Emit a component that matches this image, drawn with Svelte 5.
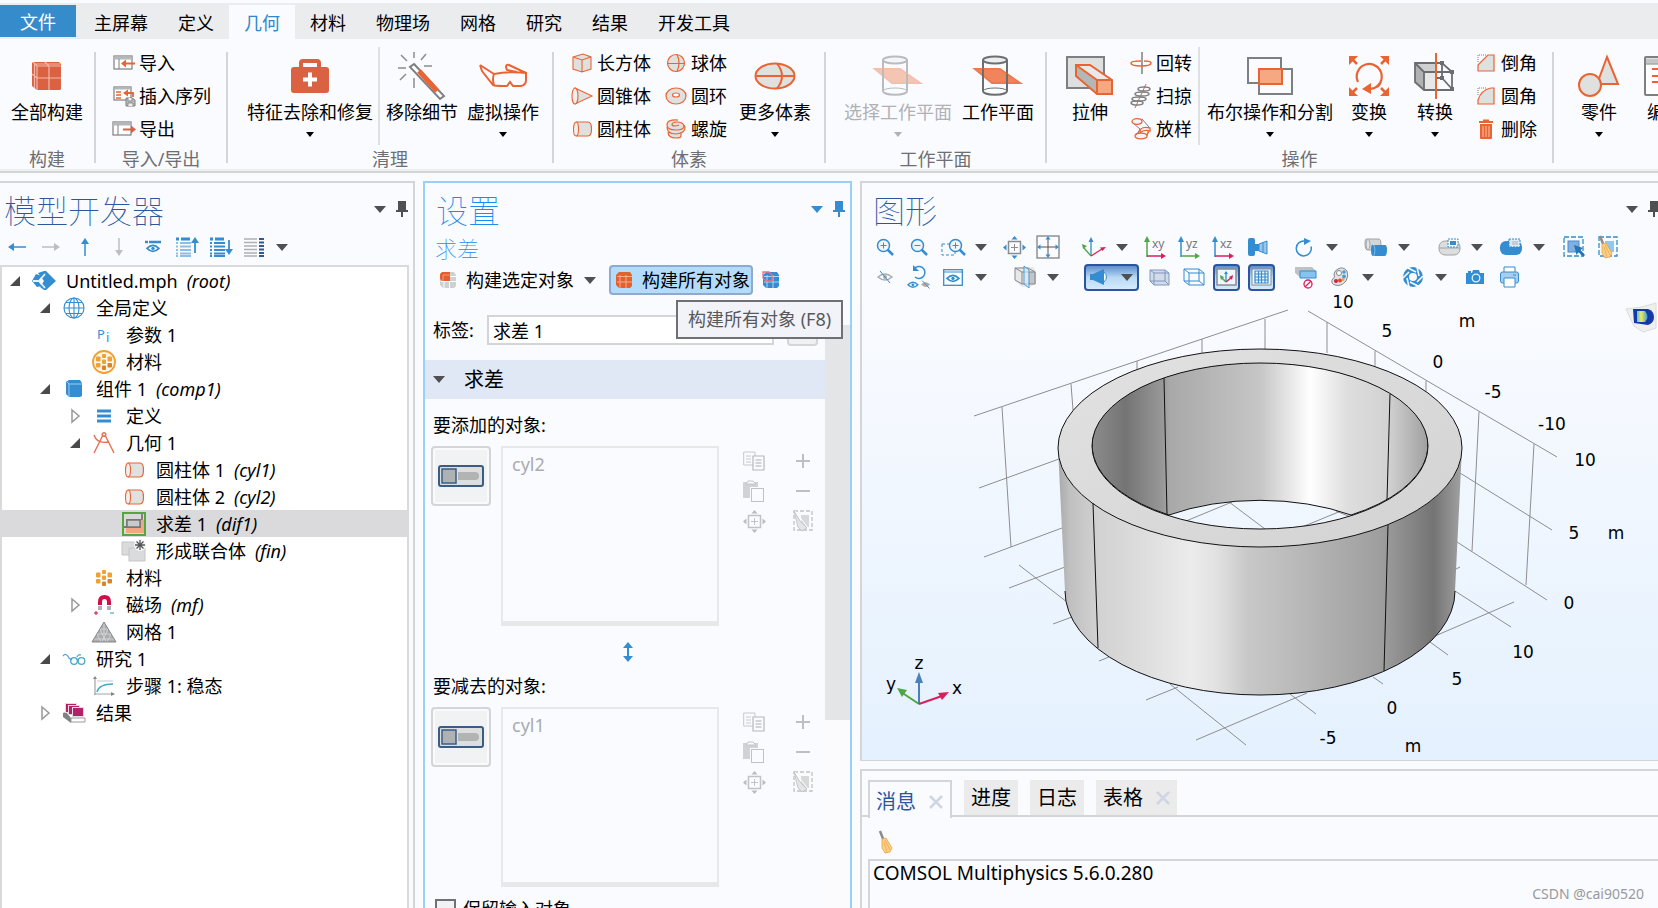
<script>
  const O = '#ea6433', G = '#7d7f80', F = '#dfe1df', B = '#338dd0', L = '#c6c8ca';
  const cyl = (s, g) => `<g fill="none" stroke="${g}" stroke-width="2"><ellipse cx="20" cy="5" rx="12" ry="3.500" fill="#eceeee"/><path d="M8 5V36c0 5 24 5 24 0V5"/><path d="M8 36c1-4 23-4 24 0" stroke-width="1"/></g><path d="M0 14H25L45 28H17Z" fill="${s}" stroke="${O}" stroke-width="2" opacity=".85"/><path d="M8 14V33M32 19V35" stroke="${g}" stroke-width="2"/>`;
  const magnifier = `<circle cx="7.500" cy="7.500" r="6" fill="#eef6fd" stroke="${B}" stroke-width="1.500"/><path d="M11.500 11.500L17 17" stroke="${B}" stroke-width="2.500"/>`;
  const axes = (n, c) => `<path d="M3 21V4" stroke="${n === 'xy' ? '#4ea645' : B}" stroke-width="1.500"/><path d="M0 6L3 0L6 6Z" fill="${n === 'xy' ? '#4ea645' : B}"/><path d="M3 20H18" stroke="${c}" stroke-width="1.500"/><path d="M17 17L22 20L17 23Z" fill="${c}"/><text x="8" y="12" font-size="12" fill="#777">${n}</text>`;
  const cells = (c) => `<g fill="${c}"><rect x="6" y="0" width="4" height="4" rx="1"/><rect x="0" y="2.500" width="4.500" height="5" rx="1"/><rect x="6" y="5.500" width="4" height="4.500" rx="1"/><rect x="11.500" y="2.500" width="4.500" height="5" rx="1"/><rect x="0" y="9" width="4.500" height="4.500" rx="1"/></g><g fill="#d5842b"><rect x="6" y="11.500" width="4" height="4.500" rx="1"/><rect x="11.500" y="9" width="4.500" height="4.500" rx="1"/></g>`;
  const cyl3 = `<path d="M4 1H16Q19.500 1 19.500 8T16 15H4" fill="${F}" stroke="${O}" stroke-width="1.200"/><ellipse cx="4" cy="8" rx="2.500" ry="7" fill="#eef0ef" stroke="${O}" stroke-width="1.100"/>`;
  const broom = (x) => `<g transform="translate(${x} 0)"><path d="M1 0L4.500 9" stroke="#8a8d90" stroke-width="2.500"/><path d="M3 8L7 7L13 17L11 21L6 22L3 17Z" fill="#fccf88" stroke="#e9a23c" stroke-width=".8"/><path d="M5 11L8 21M6 9L11 19" stroke="#e9a23c" stroke-width=".7"/></g>`;
  const eye = `<path d="M0 4Q7-3 14 4Q7 11 0 4Z" fill="none" stroke="${B}" stroke-width="2"/><circle cx="7" cy="4" r="2" fill="${B}"/>`;
  const listLines = (c) => `<path d="M1 2H4M6 2H15" stroke="${B}" stroke-width="3"/><g stroke="${c}" stroke-width="2"><path d="M1 6H3M5 6H16M1 9.500H3M5 9.500H16M1 13H3M5 13H16M1 16.500H3M5 16.500H16M1 19H3M5 19H16"/></g>`;
  const target = (c, k) => `<rect x="5.500" y="5.500" width="12" height="12" fill="none" stroke="${k}" stroke-width="1.500"/><path d="M8 11.500H15M11.500 8V15" stroke="${k}"/><g fill="${c}"><path d="M8.500 3.500L11.500 0L14.500 3.500ZM8.500 19.500L11.500 23L14.500 19.500ZM3.500 8.500L0 11.500L3.500 14.500ZM19.500 8.500L23 11.500L19.500 14.500Z"/></g>`;

  // name: [width, height, markup]
  const I = {
    buildAll: [30, 30, `<path d="M0 2L1 1H27L29 3V28L28 29H5L0 25Z" fill="#db6143"/><path d="M5 29V5H29M17 5V29M5 17H29M5 5L1 1M17 5L13 1M5 17L0 13M2.500 3H28M2.500 3V27" fill="none" stroke="#f4b9a6" stroke-width="1.200"/>`],
    import: [22, 16, `<rect x="1" y="1" width="18" height="13" fill="#fff" stroke="${G}" stroke-width="1.200"/><path d="M1 3H19" stroke="#b5b7b8" stroke-width="3"/><path d="M6 4V14" stroke="${G}"/><path d="M12 8.500H22" stroke="${O}" stroke-width="2"/><path d="M8 8.500L13 4.500V12.500Z" fill="${O}"/>`],
    insert: [22, 20, `<rect x="1" y="1" width="17" height="13" fill="#fff" stroke="${G}" stroke-width="1.200"/><path d="M1 2.500H18" stroke="#b5b7b8" stroke-width="2"/><path d="M3 6H8M3 9H8M3 12H8" stroke="${O}" stroke-width="1.300"/><path d="M14 7H20V11" fill="none" stroke="${O}" stroke-width="1.800"/><path d="M10 7L15 3.500V10.500Z" fill="${O}"/><path d="M13 12H19L22 14V20H13Z" fill="#b9bbbc" stroke="${G}"/><path d="M15 12V15H19V12M15 20V17H20V20" fill="#eee" stroke="${G}" stroke-width=".8"/>`],
    export: [24, 16, `<rect x="1" y="1" width="18" height="13" fill="#fff" stroke="${G}" stroke-width="1.200"/><path d="M1 3H19" stroke="#b5b7b8" stroke-width="3"/><path d="M6 4V14" stroke="${G}"/><path d="M11 8.500H21" stroke="#db6143" stroke-width="2"/><path d="M24 8.500L19 4.500V12.500Z" fill="#db6143"/>`],
    kit: [38, 34, `<path d="M3 8H8V4Q8 0 12 0H26Q30 0 30 4V8H35Q38 8 38 11V31Q38 34 35 34H3Q0 34 0 31V11Q0 8 3 8ZM12 8H26V4H12Z" fill="#db6143" fill-rule="evenodd"/><path d="M19 13.500V27.500M12 20.500H26" stroke="#fff" stroke-width="4"/>`],
    wand: [48, 48, `<g stroke="#8b8d8e" stroke-width="1.500"><path d="M16 0V6M3 3L9 9M28 2L23 8M0 16H8M26 14H34M2 28L8 22M16 26V36"/></g><path d="M16 12L46 44L42 47L12 15Z" fill="#fff" stroke="${G}" stroke-width="2"/><path d="M21 19L39 39" stroke="${O}" stroke-width="5"/>`],
    glasses: [48, 24, `<path d="M1 1L3 7L14 21Q16 22 24 22L28 22L31 18L34 22H42Q47 21 47 16V9Q32 7 15 10L1 1M15 10Q13 15 15 21M47 9L30 1Q27 0 27 3L28 6L38 8" fill="none" stroke="${O}" stroke-width="2"/>`],
    block: [20, 20, `<path d="M1 4L11 1L19 4V16L10 19L1 16Z" fill="${F}"/><path d="M1 4L11 1L19 4V16L10 19L1 16ZM1 4L10 7L19 4M10 7V19" fill="none" stroke="${O}" stroke-width="1.100"/>`],
    cone: [22, 18, `<path d="M4 1L21 9L4 17Z" fill="${F}" stroke="${O}" stroke-width="1.100"/><ellipse cx="4" cy="9" rx="3" ry="8" fill="#eef0ef" stroke="${O}" stroke-width="1.100"/>`],
    cylinder: [20, 16, cyl3],
    sphere: [20, 20, `<circle cx="10" cy="10" r="8.500" fill="${F}" stroke="${O}" stroke-width="1.200"/><path d="M1.500 10.500H18.500M11 1.500Q15 10 11 18.500" fill="none" stroke="${O}" stroke-width="1.200"/>`],
    torus: [22, 18, `<ellipse cx="11" cy="9" rx="10" ry="8" fill="${F}" stroke="${O}" stroke-width="1.200"/><ellipse cx="11" cy="8" rx="3.500" ry="2" fill="#fff" stroke="${O}" stroke-width="1.200"/>`],
    helix: [20, 20, `<g fill="${F}" stroke="${O}" stroke-width="1.200"><path d="M2 13Q2 19 10 19Q15 19 15 17V14"/><path d="M1 8Q1 15 10 15Q19 14 19 9Q19 6 17 6"/><path d="M12 1Q1 0 1 6Q1 11 10 11Q18 11 18 7Q17 3 11 3Q6 3 6 6Q8 8 13 6"/></g>`],
    ellipsoid: [42, 28, `<ellipse cx="21" cy="14" rx="19.500" ry="12.500" fill="${F}" stroke="${O}" stroke-width="2"/><path d="M2 14H40M23 1.500Q33 14 23 26.500" fill="none" stroke="${O}" stroke-width="2"/>`],
    plane: [46, 42, cyl('#f0703f', '#6b6e70')],
    extrude: [48, 40, `<rect x="1" y="1" width="37" height="31" fill="#dde0df" stroke="${G}" stroke-width="2"/><path d="M10 9L31 24V37L10 20Z" fill="#b5b7b6"/><path d="M10 9H24L46 24H31Z" fill="#e8e9e8"/><rect x="31" y="24" width="15" height="14" fill="#f6a883"/><path d="M10 9H24L46 24V38H31L10 20ZM10 9L31 24H46M31 24V38" fill="none" stroke="${O}" stroke-width="2"/>`],
    revolve: [22, 22, `<path d="M12 0V22" stroke="${G}" stroke-width="1.500"/><path d="M11 9Q1 9 1 11Q1 14 11 14Q21 14 21 11Q21 9 14 9" fill="none" stroke="${O}" stroke-width="1.500"/>`],
    sweep: [22, 24, `<path d="M16 0L5 24" stroke="${O}"/><g fill="none" stroke="${G}" stroke-width="1.500"><ellipse cx="14" cy="5" rx="6" ry="2"/><ellipse cx="12" cy="10" rx="7" ry="2"/><ellipse cx="9" cy="15" rx="7" ry="2"/><ellipse cx="7" cy="19" rx="6" ry="2"/></g>`],
    loft: [20, 22, `<path d="M11 1L18 9L16 18M2 5L9 11L6 17" fill="none" stroke="${G}"/><g fill="#f4f4f4" stroke="${O}" stroke-width="1.300"><ellipse cx="6" cy="3.500" rx="5" ry="2.800"/><path d="M9 13Q10 8 19 10V13Q13 11 9 15Z"/><ellipse cx="10" cy="18" rx="6" ry="2.800"/></g><path d="M5 17L9 12M16 17L19 12" stroke="${O}"/>`],
    boolean: [46, 38, `<path d="M12 26H1V1H34V12M12 26V37H45V12H34" fill="none" stroke="${G}" stroke-width="2"/><rect x="12" y="12" width="23" height="15" fill="#f6a883" stroke="${O}" stroke-width="2"/>`],
    transform: [40, 40, `<path d="M9 26A12.500 12.500 0 1 1 20 33M32 24Q32 28 28 31" fill="none" stroke="${O}" stroke-width="2.200"/><path d="M13 33L22 27V38Z" fill="${O}"/><g fill="${O}"><path d="M0 0H9L0 9ZM40 0H31L40 9ZM0 40H9L0 31ZM40 40H31L40 31Z"/></g><path d="M2 2L8 8M38 2L32 8M2 38L8 32M38 38L32 32" stroke="${O}" stroke-width="2.500"/>`],
    convert: [42, 46, `<path d="M1 10L10 18V37L1 29Z" fill="#b0b2b1"/><path d="M1 10H22V18H10Z" fill="#cfd1d0"/><path d="M10 18H22V37H10Z" fill="#e6e7e6"/><path d="M28 10H1V29L10 37H38V19L28 10V25L38 36M1 10L10 19H38M10 18V37M22 25H28" fill="none" stroke="#6b6e70" stroke-width="1.800"/><path d="M22 0V46" stroke="${O}" stroke-width="2"/><g fill="#6b6e70"><path d="M26 8H30V12H26ZM36 17H40V21H36ZM36 34H40V38H36ZM26 23H30V27H26Z"/></g>`],
    chamfer: [18, 18, `<path d="M1 11L11 1H17V17H1Z" fill="${F}" stroke="${O}" stroke-width="1.200"/><path d="M1 8V1H9" fill="none" stroke="${G}" stroke-dasharray="1 1"/>`],
    fillet: [18, 18, `<path d="M1 13Q4 3 14 1H17V17H1Z" fill="${F}" stroke="${O}" stroke-width="1.200"/><path d="M1 8V1H9" fill="none" stroke="${G}" stroke-dasharray="1 1"/>`],
    trash: [14, 20, `<path d="M0 3H14" stroke="${O}" stroke-width="2"/><path d="M4 1.500H10" stroke="${O}" stroke-width="2"/><path d="M1 5H13V19Q13 20 12 20H2Q1 20 1 19Z" fill="${O}"/><path d="M4 7V18M7 7V18M10 7V18" stroke="#f9c4ad" stroke-width="1"/>`],
    parts: [42, 42, `<path d="M29 2L40 29H19Z" fill="${F}" stroke="${O}" stroke-width="2"/><circle cx="12" cy="30" r="11" fill="${F}" stroke="${O}" stroke-width="2"/>`],
    editPart: [42, 40, `<rect x="1" y="1" width="40" height="38" rx="1" fill="#fff" stroke="${G}" stroke-width="2"/><path d="M2 5H40" stroke="#c3c5c6" stroke-width="5"/><path d="M1 8H41" stroke="${G}"/><path d="M8 13H20M8 20H18M8 26H20" stroke="${O}" stroke-width="2"/>`],

    left: [18, 8, `<path d="M5 4H18" stroke="${B}" stroke-width="1.500"/><path d="M0 4L6 0V8Z" fill="${B}"/>`],
    right: [18, 8, `<path d="M0 4H13" stroke="#bcbec0" stroke-width="1.500"/><path d="M18 4L12 0V8Z" fill="#bcbec0"/>`],
    up: [8, 18, `<path d="M4 5V18" stroke="${B}" stroke-width="1.500"/><path d="M4 0L0 6H8Z" fill="${B}"/>`],
    down: [8, 18, `<path d="M4 0V13" stroke="#bcbec0" stroke-width="1.500"/><path d="M4 18L0 12H8Z" fill="#bcbec0"/>`],
    showEye: [16, 14, `<path d="M0 2H3M4 2H16" stroke="${B}" stroke-width="2.500"/><g transform="translate(2 5) scale(.85)">${eye}</g>`],
    listUp: [24, 20, listLines('#8dbfe6') + `<path d="M20 5V16" stroke="${B}" stroke-width="1.800"/><path d="M20 0L16 6H24Z" fill="${B}"/>`],
    listDown: [24, 20, listLines(B) + `<path d="M20 3V14" stroke="${B}" stroke-width="1.800"/><path d="M20 18L16 12H24Z" fill="${B}"/>`],
    listCols: [22, 20, `<path d="M0 2H13M0 5.500H13M0 9H13M0 12.500H13M0 16H13M0 19H13" stroke="#aeb0b2" stroke-width="1.500"/><path d="M15 2H20M15 5.500H20M15 9H20M15 12.500H20M15 16H20M15 19H20" stroke="#2c5b96" stroke-width="1.800"/>`],
    caret: [12, 7, `<path d="M0 0H12L6 7Z" fill="currentColor"/>`],
    caretSm: [8, 5, `<path d="M0 0H8L4 5Z" fill="currentColor"/>`],
    pin: [12, 16, `<path d="M2 0H10V9H12V11H7V16H5V11H0V9H2Z" fill="currentColor"/>`],

    root: [24, 20, `<path d="M6 2L12 0H14L24 10L14 19H12L8 16L12 10Z" fill="${B}"/><path d="M4 3L10 5L6 10L10 15L5 16L0 10Z" fill="${B}"/><path d="M1 10H7L13 3M7 10L13 17" stroke="#e6f2fc" stroke-width="1.800" fill="none"/>`],
    globe: [22, 22, `<g fill="none" stroke="${B}" stroke-width="1.100"><circle cx="11" cy="11" r="10"/><ellipse cx="11" cy="11" rx="5" ry="10"/><path d="M11 1V21M1 11H21M3 5.500H19M3 16.500H19"/></g>`],
    param: [14, 16, `<text x="0" y="12" font-size="13" fill="${B}">P</text><text x="9" y="15" font-size="13" fill="${B}">i</text>`],
    matRing: [24, 24, `<circle cx="12" cy="12" r="11" fill="#fff6e6" stroke="#f0a035" stroke-width="1.800"/><g transform="translate(4 4)">${cells('#f0a035')}</g>`],
    materials: [16, 16, cells('#f0a035')],
    comp: [18, 18, `<path d="M1 2L4 0H15L17 3V16L15 17H4L1 14Z" fill="${B}"/><path d="M4 17V4H17M1 1L4 4" fill="none" stroke="#9fcdf0"/>`],
    defs: [14, 14, `<path d="M0 2H14M0 7H14M0 12H14" stroke="${B}" stroke-width="3"/>`],
    geom: [22, 22, `<g fill="none" stroke="#e3704e" stroke-width="1.400"><path d="M1 21L10 3M21 21L12 3M1 3Q4 12 15 10"/><circle cx="11" cy="2.500" r="1.800"/></g>`],
    diff: [24, 24, `<rect x="1" y="1" width="22" height="22" fill="#d9d9d6" stroke="#53a83d" stroke-width="2"/><rect x="4" y="8" width="18" height="13" fill="#f4a582"/><path d="M2 15H18V8H5V15M20 2V8" fill="none" stroke="#76787a" stroke-width="1.800"/><path d="M5 8H18V15H5Z" fill="#c9cbca" stroke="#76787a" stroke-width="1.500"/>`],
    union: [24, 22, `<path d="M0 2H12L16 8H23V21H7V15H0Z" fill="#dadbdb" stroke="#c3c5c6"/><path d="M7 15V8H14" fill="none" stroke="#c3c5c6"/><circle cx="18" cy="5" r="6" fill="#f6f6f8"/><path d="M18 0V10M13 5H23M14.500 1.500L21.500 8.500M21.500 1.500L14.500 8.500" stroke="#55585a" stroke-width="1.300"/>`],
    magnet: [20, 20, `<path d="M6 10V7Q6 2 10.500 2T15 7V10" fill="none" stroke="#cf0f47" stroke-width="4"/><path d="M4 13H8M13 13H17" stroke="#aeb0b2" stroke-width="4"/><path d="M0 18H4M2 16V20" stroke="#cf0f47"/><path d="M16 18H20" stroke="${B}"/>`],
    mesh: [24, 20, `<path d="M12 0L24 20H0Z" fill="#a9abac"/><g stroke="#dcdddd" stroke-width=".8" fill="none"><path d="M8 7L16 7M5 12H19M2 17H22M8 7L14 20M16 7L10 20M5 12L9 20M19 12L15 20M12 2V12"/></g><path d="M12 0L24 20H0Z" fill="none" stroke="#85888a"/>`],
    study: [22, 12, `<g fill="none" stroke="#45a9c9" stroke-width="1.300"><path d="M0 3Q3-1 6 5L9 7M14 4Q15 1 18 2"/><circle cx="11" cy="8" r="3.300"/><circle cx="18.500" cy="8" r="3.300"/><path d="M14 7Q14.500 6 15.500 7"/></g>`],
    step: [22, 20, `<path d="M2 19V1M1 18H21" stroke="#a1a3a5" stroke-width="1.200"/><path d="M0 3L2 0L4 3ZM18 16L22 18L18 20Z" fill="#85888a"/><path d="M4 5H20" stroke="#c4c6c8"/><path d="M4 16Q6 8 20 8" fill="none" stroke="#45a9c9" stroke-width="1.500"/>`],
    results: [22, 20, `<path d="M0 10L3 9L8 15V20L0 14Z" fill="#808284"/><g fill="#b3216b" stroke="#e8d8e0"><rect x="2.500" y=".5" width="11" height="9"/><rect x="5.500" y="2.500" width="11" height="9"/><rect x="9.500" y="4.500" width="11" height="9"/></g><path d="M8 15H22V19H8Z" fill="#fff" stroke="#999"/>`],

    buildSel: [16, 16, `<path d="M0 3L3 0H14L16 3V14L14 16H3L0 13Z" fill="#cfd1d1"/><path d="M9.500 1V16M1 9.500H16M4 4.500H16M4 4V16" stroke="#fff" stroke-width=".9"/><path d="M0 2L2 0H10V9H2L0 7Z" fill="#e4602f"/><path d="M3 9V3H10" fill="none" stroke="#f4a98d" stroke-width=".8"/>`],
    buildObj: [16, 16, `<path d="M0 3L3 0H14L16 3V14L14 16H3L0 13Z" fill="#e4602f"/><path d="M4 3V16M10 3V16M1 4.500H16M1 10H16" stroke="#f9b49c" stroke-width=".9"/>`],
    buildNext: [16, 16, `<path d="M0 3L3 0H14L16 3V14L14 16H3L0 13Z" fill="${B}"/><path d="M10 3V16M4 3V16M1 4.500H16M1 10H16" stroke="#b8dcf5" stroke-width=".9"/><path d="M0 0H6L9 3V9H3L0 6Z" fill="none" stroke="#f06a8a" stroke-width="1.300"/>`],
    toggle: [46, 22, `<rect x="1" y="1" width="44" height="20" rx="2" fill="#dcdfde" stroke="#3b5c85" stroke-width="2"/><rect x="4" y="4" width="14" height="14" fill="#afb2b2" stroke="#3b5c85" stroke-width="1.500"/><path d="M20 7H37Q41 7 41 11T37 15H20Z" fill="#b1b4b3"/>`],
    copy: [22, 20, `<path d="M.7 1H12V14H.7Z" fill="#fafbff" stroke="${L}"/><path d="M3 5H8M3 8H8M3 11H8" stroke="${L}"/><path d="M10 5H21V19H10Z" fill="#fafbff" stroke="#b5b7b9" stroke-width="1.200"/><path d="M12.500 9H18.500M12.500 12H18.500M12.500 15H18.500" stroke="#aaadb0"/>`],
    paste: [22, 22, `<path d="M0 2H15V7H7V18H0Z" fill="#d0d2d4"/><path d="M3 4L5 1H10L13 4Z" fill="#fafbff" stroke="#c0c2c4"/><rect x="8.500" y="8.500" width="12" height="13" fill="#fafbff" stroke="#c0c2c4"/>`],
    target: [23, 23, target('#b9bbbd', '#c0c2c4')],
    plus: [14, 14, `<path d="M7 0V14M0 7H14" stroke="#bdbfc1" stroke-width="2"/>`],
    minus: [14, 4, `<path d="M0 2H14" stroke="#bdbfc1" stroke-width="2"/>`],
    clear: [20, 22, `<rect x="1" y="1" width="18" height="19" fill="none" stroke="#c0c2c4" stroke-width="1.300" stroke-dasharray="4 2"/><path d="M8 5H16V17H8Z" fill="#d6d8da"/><path d="M1 1L7 11L14 18L9 21L5 17Z" fill="#e4e5e6" stroke="#b9bbbd" stroke-width=".8"/><path d="M2 1L15 18" stroke="#fff"/>`],
    swap: [10, 20, `<path d="M5 4V16" stroke="${B}" stroke-width="2"/><path d="M5 0L0 6H10ZM5 20L0 14H10Z" fill="${B}"/>`],

    zoomIn: [18, 18, magnifier + `<path d="M4.500 7.500H10.500M7.500 4.500V10.500" stroke="${B}"/>`],
    zoomOut: [18, 18, magnifier + `<path d="M4.500 7.500H10.500" stroke="${B}"/>`],
    zoomBox: [24, 20, `<rect x="1" y="7" width="13" height="11" fill="none" stroke="${B}" stroke-dasharray="3 2"/><g transform="translate(7 1)">${magnifier}<path d="M4.500 7.500H10.500M7.500 4.500V10.500" stroke="${B}"/></g>`],
    extents: [23, 23, target(B, '#8a8c8e')],
    fit: [24, 24, `<rect x="1" y="1" width="22" height="22" fill="none" stroke="#777" stroke-width="1.200"/><path d="M4 12H20M12 4V20" stroke="#555"/><g fill="${B}"><path d="M9.500 4.500L12 1L14.500 4.500ZM9.500 19.500L12 23L14.500 19.500ZM4.500 9.500L1 12L4.500 14.500ZM19.500 9.500L23 12L19.500 14.500Z"/></g>`],
    triad: [24, 20, `<path d="M9 19V3" stroke="${B}" stroke-width="1.300"/><path d="M6.500 5L9 0L11.500 5Z" fill="${B}"/><path d="M9 19L2 11" stroke="#4ea645" stroke-width="1.300"/><path d="M0 7L5 9L1 12Z" fill="#4ea645"/><path d="M9 19L20 12" stroke="#d91e5c" stroke-width="1.300"/><path d="M24 10L18 10.500L20.500 14Z" fill="#d91e5c"/>`],
    xy: [24, 23, axes('xy', '#d91e5c')],
    yz: [24, 23, axes('yz', '#4ea645')],
    xz: [24, 23, axes('xz', '#d91e5c')],
    camcorder: [20, 18, `<rect x="0" y="0" width="7" height="18" rx="2" fill="${B}"/><path d="M7 6H11V13H7Z" fill="${B}"/><path d="M11 6L19 3V16L11 13ZM15 4.500V14.500" fill="#9dc4ea" stroke="${B}"/>`],
    rotate: [18, 19, `<path d="M10 3A7.500 7.500 0 1 0 16 8.500" fill="none" stroke="${B}" stroke-width="1.500"/><path d="M9 0L16 3L9 7Z" fill="${B}"/>`],
    twoCyl: [22, 18, `<path d="M2 1H14Q16 1 16 6T14 12H2Q0 12 0 6T2 1Z" fill="#d4d6d7" stroke="#a1a3a5"/><ellipse cx="3" cy="6.500" rx="2" ry="5" fill="#e4e5e6" stroke="#a1a3a5"/><path d="M8 7H20Q22 7 22 12T20 18H8Q6 18 6 12T8 7Z" fill="${B}"/><path d="M9 7Q11 12 9 18" fill="none" stroke="#7db8e6"/>`],
    selGray: [23, 18, `<rect x="1" y="3" width="21" height="14" rx="6" fill="#dcdedd" stroke="#a1a3a5"/><path d="M1 10H22" stroke="#a1a3a5"/><rect x="10" y="1" width="10" height="8" fill="#fafbff" stroke="${B}" stroke-dasharray="2 1"/><rect x="12" y="3" width="6" height="4" fill="${B}"/>`],
    selBlue: [23, 18, `<rect x="0" y="3" width="22" height="14" rx="6" fill="${B}"/><rect x="9" y="1" width="11" height="8" fill="#d7eafa" stroke="${B}" stroke-dasharray="2 1"/><rect x="12" y="3" width="6" height="4" fill="#c9ccd2"/>`],
    selBox: [22, 22, `<rect x="1" y="1" width="19" height="19" fill="none" stroke="${B}" stroke-width="1.300" stroke-dasharray="5 2"/><rect x="5" y="5" width="11" height="11" fill="#7fb0e4" stroke="#4e8ac8"/><path d="M11 9L20 12L17.500 14L22 19L20 21L15.500 16L13.500 19Z" fill="#2576b8"/>`],
    selClear: [22, 22, `<rect x="2" y="1" width="18" height="19" fill="none" stroke="${B}" stroke-width="1.300" stroke-dasharray="5 2"/><rect x="8" y="5" width="9" height="11" fill="#8fc8f1"/>${broom(2)}`],
    eyeOff: [14, 12, `<g transform="translate(0 2)"><path d="M0 4Q7-2 14 4Q7 10 0 4Z" fill="none" stroke="#abadaf" stroke-width="1.500"/><circle cx="7" cy="4" r="2" fill="#abadaf"/></g><path d="M2 0L12 12" stroke="${B}"/>`],
    resetHide: [22, 24, `<path d="M6 4A6 6 0 1 1 7 12" fill="none" stroke="${B}" stroke-width="1.500"/><path d="M5 0V6H11Z" fill="${B}"/><g transform="translate(0 17) scale(.7)">${eye}</g><g transform="translate(13 17) scale(.65)"><path d="M0 4Q7-3 14 4Q7 11 0 4Z" fill="#abadaf"/><path d="M2-2L13 10" stroke="${B}" stroke-width="1.500"/></g>`],
    eyeBox: [20, 17, `<rect x=".7" y=".7" width="18.600" height="15.600" fill="#fff" stroke="${B}" stroke-width="1.300"/><path d="M1 3H19" stroke="${B}"/><g transform="translate(4 6) scale(.85)">${eye}</g>`],
    clip: [22, 22, `<path d="M1 3L7 1H19L22 5V18L16 21H8L1 15Z" fill="#e6e8e9"/><path d="M14 6H22V18H14Z" fill="#c3c6c8"/><path d="M1 2H14L21 6V18H8L1 14ZM1 2L8 6H21M8 6V18" fill="none" stroke="#85888a"/><path d="M10 0L15 4V22L10 18Z" fill="#d3e9f8" fill-opacity=".6" stroke="${B}" stroke-opacity=".8"/>`],
    light: [18, 16, `<path d="M0 5H3L14 0V16L3 11H0Z" fill="${B}"/><path d="M14 3Q19 8 14 13" fill="#fff" stroke="${B}"/>`],
    transparent: [22, 18, `<path d="M1 2H16L20 5V17H5L1 13Z" fill="#d3dbe9"/><path d="M1 2H16L20 5V17H5L1 13ZM1 2L5 5H20M5 5V17M1 13H16M16 2V13L20 17" fill="none" stroke="#7c97c2"/>`],
    wire: [22, 18, `<path d="M1 1H16L21 5V17H6L1 13ZM1 1L6 5H21M6 5V17M1 13H16M16 1V13L21 17" fill="none" stroke="${B}" stroke-width="1"/>`],
    axesOn: [21, 18, `<rect x="1" y="1" width="19" height="16" fill="#eef7fd" stroke="#8b8d8f" stroke-width="1.500"/><path d="M10 14V4" stroke="${B}" stroke-width="1.300"/><path d="M8 6L10 3L12 6Z" fill="${B}"/><path d="M10 14L5 9" stroke="#4ea645" stroke-width="1.500"/><path d="M4 7L8 9L5 12Z" fill="#4ea645"/><path d="M10 14L16 9" stroke="#d91e5c" stroke-width="1.500"/><path d="M17 7L16 12L13 9Z" fill="#d91e5c"/>`],
    gridOn: [21, 18, `<rect x="1" y="1" width="19" height="16" fill="#eef7fd" stroke="#8b8d8f"/><path d="M4 3H17V15H4ZM7.500 3V15M10.500 3V15M14 3V15M4 6H17M4 9H17M4 12H17" fill="none" stroke="${B}" stroke-width="1.200"/>`],
    noSel: [22, 23, `<path d="M0 1H17L21 5V12H6L0 7Z" fill="#bfc1c3"/><path d="M5 5H21V12H5Z" fill="#87c3ee" stroke="${B}"/><circle cx="13" cy="18" r="4" fill="#fff" stroke="#d91e5c" stroke-width="1.300"/><path d="M10 21L16 15" stroke="#d91e5c" stroke-width="1.300"/>`],
    palette: [18, 20, `<path d="M7 2Q12-1 16 4Q18 9 15 14Q10 20 4 18Q0 17 1 13Q5 10 3 7Q4 3 7 2Z" fill="#e2e3e4" stroke="#85888a"/><circle cx="8" cy="6" r="2.500" fill="#fff" stroke="#85888a"/><circle cx="13" cy="5" r="1.800" fill="#4b9bd8"/><circle cx="13" cy="9.500" r="1.900" fill="#4b9bd8"/><circle cx="5" cy="14" r="2" fill="#d91e3c"/><circle cx="9" cy="13.500" r="2" fill="#e2452c"/><circle cx="12" cy="12.500" r="1.500" fill="#f0a035"/>`],
    shutter: [20, 20, `<circle cx="10" cy="10" r="7" fill="none" stroke="${B}" stroke-width="6"/><path d="M5 1L13 5M14 0L16 9M20 9L14 15M15 19L7 15M6 20L4 11M0 11L6 5" stroke="#fafbff" stroke-width="1.600"/>`],
    camera: [18, 15, `<path d="M0 3H2V1H5V3H6L7 0H13L14 3H18V14H0Z" fill="${B}"/><circle cx="10" cy="8" r="3.800" fill="none" stroke="#e4f1fb" stroke-width="1.300"/>`],
    printer: [19, 22, `<path d="M4 1H15V8H4Z" fill="#fff" stroke="${B}"/><rect x=".5" y="6" width="18" height="11" rx="2" fill="#a9cdec" stroke="${B}"/><path d="M4 12H15V21H4Z" fill="#fff" stroke="${B}"/><path d="M13 9H16" stroke="${B}"/>`],
    broom: [16, 23, broom(1)],
    close: [14, 14, `<path d="M1 1L13 13M13 1L1 13" stroke="#cfd5e2" stroke-width="2.500"/>`],
  };

  const tabs = ['主屏幕', '定义', '几何', '材料', '物理场', '网格', '研究', '结果', '开发工具'];

  // A number is a gap in pixels, '|' an inner divider, b a large button, s a stack of small ones.
  const groups = [
    { label: '构建', items: [11, { b: ['buildAll', '全部构建'] }, 11] },
    { label: '导入/导出', items: [17, { s: [['import', '导入'], ['insert', '插入序列'], ['export', '导出']] }, 15] },
    { label: '清理', items: [19, { b: ['kit', '特征去除和修复', 1] }, 5, '|', 6, { b: ['wand', '移除细节'] }, 9, { b: ['glasses', '虚拟操作', 1] }, 13] },
    { label: '体素', items: [17, { s: [['block', '长方体'], ['cone', '圆锥体'], ['cylinder', '圆柱体']] }, 14, { s: [['sphere', '球体'], ['torus', '圆环'], ['helix', '螺旋']] }, 12, { b: ['ellipsoid', '更多体素', 1] }, 13] },
    { label: '工作平面', items: [18, { b: ['plane', '选择工作平面', 1], off: true }, 10, { b: ['plane', '工作平面'] }, 11] },
    { label: '操作', items: [19, { b: ['extrude', '拉伸'] }, 16, { s: [['revolve', '回转'], ['sweep', '扫掠'], ['loft', '放样']] }, 6, '|', 7, { b: ['boolean', '布尔操作和分割', 1] }, 13, { b: ['transform', '变换', 1] }, 20, { b: ['convert', '转换', 1] }, 17, { s: [['chamfer', '倒角'], ['fillet', '圆角'], ['trash', '删除']] }, 15] },
    { label: '', items: [22, { b: ['parts', '零件', 1] }, 20, { b: ['editPart', '编辑'] }] },
  ];

  const tree = [
    [0, 'open', 'root', 'Untitled.mph', 'root'],
    [1, 'open', 'globe', '全局定义'],
    [2, '', 'param', '参数 1'],
    [2, '', 'matRing', '材料'],
    [1, 'open', 'comp', '组件 1', 'comp1'],
    [2, 'shut', 'defs', '定义'],
    [2, 'open', 'geom', '几何 1'],
    [3, '', 'cylinder', '圆柱体 1', 'cyl1'],
    [3, '', 'cylinder', '圆柱体 2', 'cyl2'],
    [3, '', 'diff', '求差 1', 'dif1'],
    [3, '', 'union', '形成联合体', 'fin'],
    [2, '', 'materials', '材料'],
    [2, 'shut', 'magnet', '磁场', 'mf'],
    [2, '', 'mesh', '网格 1'],
    [1, 'open', 'study', '研究 1'],
    [2, '', 'step', '步骤 1: 稳态'],
    [1, 'shut', 'results', '结果'],
  ];
  let selected = $state(9);

  const modelTools = ['left', 'right', 'up', 'down', 'showEye', 'listUp', 'listDown', 'listCols', 'caret'];
  const viewTools = [
    ['zoomIn', 'zoomOut', 'zoomBox', 'caret', 5, 'extents', 'fit', 12, 'triad', 'caret', 6, 'xy', 'yz', 'xz', 'camcorder', 12, 'rotate', 'caret', 16, 'twoCyl', 'caret', 17, 'selGray', 'caret', 6, 'selBlue', 'caret', 7, 'selBox', 'selClear'],
    ['eyeOff', 'resetHide', 'eyeBox', 'caret', 16, 'clip', 'caret', 20, '*light', 4, 'transparent', 'wire', 2, '*axesOn', 8, '*gridOn', 14, 'noSel', 'palette', 'caret', 17, 'shutter', 'caret', 6, 'camera', 'printer'],
  ];
  const sections = [
    { title: '要添加的对象:', item: 'cyl2' },
    { title: '要减去的对象:', item: 'cyl1' },
  ];
  const listTools = ['copy', 'plus', 'paste', 'minus', 'target', 'clear'];

  const grid = [
    [974, 416, 1288, 310], [1002, 407, 1011, 547], [1071, 384, 1073, 410], [1137, 361, 1137, 369],
    [1202, 339, 1202, 353], [1265, 319, 1265, 349], [979, 488, 1059, 459], [984, 557, 1062, 528],
    [1019, 565, 1067, 602], [1009, 588, 1065, 567], [1053, 624, 1072, 617], [1099, 661, 1109, 657],
    [1146, 700, 1178, 687], [1170, 684, 1246, 745], [1196, 740, 1307, 693], [1290, 694, 1316, 714],
    [1373, 677, 1383, 684], [1430, 642, 1448, 655], [1455, 591, 1511, 627], [1435, 636, 1514, 602],
    [1308, 311, 1557, 457], [1327, 322, 1327, 353], [1375, 351, 1375, 366], [1426, 381, 1426, 391],
    [1479, 412, 1472, 551], [1534, 444, 1526, 585], [1460, 473, 1552, 530], [1457, 542, 1547, 600],
    [1456, 569, 1460, 567], [1186, 521, 1232, 502], [1229, 502, 1265, 529], [1302, 527, 1341, 511], [1336, 511, 1353, 518],
  ];
  const ticks = [
    ['10', 1343, 301], ['m', 1467, 320], ['5', 1387, 330], ['0', 1438, 361], ['-5', 1493, 391], ['-10', 1552, 423],
    ['10', 1585, 459], ['5', 1574, 532], ['m', 1616, 532], ['0', 1569, 602], ['10', 1523, 651], ['5', 1457, 678],
    ['0', 1392, 707], ['-5', 1328, 737], ['m', 1413, 745], ['z', 919, 662], ['y', 891, 683], ['x', 957, 687],
  ];
</script>

{#snippet icon(name)}
  <svg width={I[name][0]} height={I[name][1]} viewBox="0 0 {I[name][0]} {I[name][1]}" aria-hidden="true">{@html I[name][2]}</svg>
{/snippet}

<div class="app">
  <nav class="tabs">
    <button class="file">文件</button>
    {#each tabs as t}
      <button class:active={t === '几何'}>{t}</button>
    {/each}
  </nav>

  <div class="ribbon">
    {#each groups as g, gi}
      {#if gi}<i class="sep"></i>{/if}
      <div class="group">
        <div class="items">
          {#each g.items as it}
            {#if typeof it === 'number'}
              <i style="width:{it}px"></i>
            {:else if it === '|'}
              <i class="inner"></i>
            {:else if it.b}
              <button class="big" disabled={it.off}>
                <span class="pic">{@render icon(it.b[0])}</span>
                <span>{it.b[1]}</span>
                <span class="drop">{#if it.b[2]}{@render icon('caretSm')}{/if}</span>
              </button>
            {:else}
              <div class="stack">
                {#each it.s as [ic, text]}
                  <button class="small"><span class="pic">{@render icon(ic)}</span>{text}</button>
                {/each}
              </div>
            {/if}
          {/each}
        </div>
        <div class="glabel">{g.label}</div>
      </div>
    {/each}
  </div>

  <main>
    <section class="panel model">
      <header>
        <h2>模型开发器</h2>
        <button class="hbtn" aria-label="菜单">{@render icon('caret')}</button>
        <button class="hbtn" aria-label="固定">{@render icon('pin')}</button>
      </header>
      <div class="tools">
        {#each modelTools as t}
          <button class="tb" class:car={t === 'caret'} aria-label={t}>{@render icon(t)}</button>
        {/each}
      </div>
      <ul class="tree" role="tree">
        {#each tree as [level, state, ic, text, tag], n}
          <li role="treeitem" aria-level={level + 1} aria-selected={n === selected} class="l{level}" class:sel={n === selected}>
            <button class="exp" aria-label="展开" disabled={!state}>
              {#if state === 'open'}
                <svg width="10" height="10"><path d="M10 0V10H0Z" fill="#4a4a4c" /></svg>
              {:else if state === 'shut'}
                <svg width="9" height="14"><path d="M1 1L8 7L1 13Z" fill="#fff" stroke="#98999b" stroke-width="1.5" /></svg>
              {/if}
            </button>
            <button class="node" onclick={() => (selected = n)}>
              <span class="pic">{@render icon(ic)}</span>
              <span>{text}</span>
              {#if tag}<em>({tag})</em>{/if}
            </button>
          </li>
        {/each}
      </ul>
    </section>

    <section class="panel settings">
      <header>
        <h2>设置</h2>
        <button class="hbtn" aria-label="菜单">{@render icon('caret')}</button>
        <button class="hbtn" aria-label="固定">{@render icon('pin')}</button>
      </header>
      <h3>求差</h3>
      <div class="actions">
        <button class="act">{@render icon('buildSel')}构建选定对象</button>
        <button class="more" aria-label="更多">{@render icon('caret')}</button>
        <div class="hot">
          <button class="act on">{@render icon('buildObj')}构建所有对象</button>
          <div class="tip" role="tooltip">构建所有对象 (F8)</div>
        </div>
        <button class="act last" aria-label="构建下一个">{@render icon('buildNext')}</button>
      </div>
      <div class="scroller">
        <div class="form">
          <div class="field">
            <label for="tag">标签:</label>
            <input id="tag" type="text" value="求差 1" />
            <button class="go" aria-label="转到"></button>
          </div>
          <button class="fold">{@render icon('caret')}求差</button>
          {#each sections as s, n}
            {#if n}<button class="swap" aria-label="交换">{@render icon('swap')}</button>{/if}
            <h4>{s.title}</h4>
            <div class="pick">
              <button class="toggle" aria-label="激活选择">{@render icon('toggle')}</button>
              <ul class="list"><li>{s.item}</li></ul>
              <div class="ops">
                {#each listTools as t}
                  <button disabled aria-label={t}>{@render icon(t)}</button>
                {/each}
              </div>
            </div>
          {/each}
          <label class="keep"><input type="checkbox" />保留输入对象</label>
        </div>
        <div class="bar"><div class="thumb"></div></div>
      </div>
    </section>

    <div class="right">
      <section class="panel view">
        <header>
          <h2>图形</h2>
          <button class="hbtn" aria-label="菜单">{@render icon('caret')}</button>
          <button class="hbtn" aria-label="固定">{@render icon('pin')}</button>
        </header>
        {#each viewTools as row}
          <div class="tools">
            {#each row as t}
              {#if typeof t === 'number'}
                <i style="width:{t}px"></i>
              {:else if t === '*light'}
                <button class="tb down wide" aria-label="场景光">{@render icon('light')}{@render icon('caret')}</button>
              {:else if t[0] === '*'}
                <button class="tb down" aria-label={t.slice(1)}>{@render icon(t.slice(1))}</button>
              {:else}
                <button class="tb" class:car={t === 'caret'} aria-label={t}>{@render icon(t)}</button>
              {/if}
            {/each}
          </div>
        {/each}
        <svg class="scene" viewBox="862 292 796 468" preserveAspectRatio="xMidYMid meet">
          <defs>
            <linearGradient id="wall" gradientUnits="userSpaceOnUse" x1="1058" y1="0" x2="1462" y2="0">
              <stop offset="0" stop-color="#a9a9a9" /><stop offset=".03" stop-color="#c0c0c0" /><stop offset=".1" stop-color="#d2d2d2" />
              <stop offset=".22" stop-color="#dedede" /><stop offset=".33" stop-color="#ececec" /><stop offset=".39" stop-color="#e2e2e2" />
              <stop offset=".47" stop-color="#c8c8c8" /><stop offset=".6" stop-color="#b8b8b8" /><stop offset=".8" stop-color="#9e9e9e" />
              <stop offset=".93" stop-color="#747474" /><stop offset="1" stop-color="#a2a2a2" />
            </linearGradient>
            <linearGradient id="bore" gradientUnits="userSpaceOnUse" x1="1092" y1="0" x2="1428" y2="0">
              <stop offset="0" stop-color="#8c8c8c" /><stop offset=".1" stop-color="#747474" /><stop offset=".21" stop-color="#989898" />
              <stop offset=".23" stop-color="#a8a8a8" /><stop offset=".5" stop-color="#c6c6c6" /><stop offset=".57" stop-color="#e0e0e0" />
              <stop offset=".65" stop-color="#fff" /><stop offset=".76" stop-color="#dedede" /><stop offset=".88" stop-color="#d2d2d2" />
              <stop offset="1" stop-color="#a0a0a0" />
            </linearGradient>
            <linearGradient id="rim" x1="0" y1="0" x2="1" y2="1">
              <stop offset="0" stop-color="#e2e2e2" /><stop offset="1" stop-color="#d2d2d2" />
            </linearGradient>
            <linearGradient id="logo" x1="0" y1="0" x2="1" y2="0">
              <stop offset="0" stop-color="#5cc0e8" /><stop offset=".4" stop-color="#f3ea55" /><stop offset="1" stop-color="#3aa0dc" />
            </linearGradient>
          </defs>
          <g stroke="#8d8e90" stroke-width="1">
            {#each grid as [x1, y1, x2, y2]}<line {x1} {y1} {x2} {y2} />{/each}
          </g>
          <g stroke="#111" stroke-width="1">
            <path d="M1169 515A168 83 0 1 1 1351 515A162 85 0 0 0 1169 515Z" fill="url(#bore)" />
            <path d="M1058 448L1065 591A195 104 0 0 0 1455 591L1462 448A202 99 0 0 1 1058 448Z" fill="url(#wall)" stroke="none" />
            <path d="M1065 591A195 104 0 0 0 1455 591" fill="none" />
            <path d="M1164 378L1167 515M1390 394L1387 500" fill="none" />
            <path d="M1058 448A202 99 0 0 1 1462 448A202 99 0 0 1 1058 448ZM1092 446A168 83 0 0 0 1428 446A168 83 0 0 0 1092 446Z" fill="url(#rim)" fill-rule="evenodd" />
            <path d="M1093 503L1098 648M1388 525L1384 671" fill="none" />
          </g>
          <g class="ticks">
            {#each ticks as [t, x, y]}<text {x} y={y + 7}>{t}</text>{/each}
          </g>
          <g stroke-width="2">
            <path d="M919 704V680" stroke="#4a80bd" /><path d="M915 683L919 672L923 683Z" fill="#4a80bd" />
            <path d="M919 704L901 692" stroke="#4ea645" /><path d="M897 688L907 690L902 697Z" fill="#4ea645" />
            <path d="M919 704L942 696" stroke="#d91e5c" /><path d="M949 692L938 693L942 700Z" fill="#d91e5c" />
          </g>
          <path d="M1626 309L1642 307L1656 303V328L1643 332L1634 326Z" fill="#efeff0" stroke="#dcdcde" />
          <path d="M1633 309H1648Q1654 311 1654 317T1648 325L1634 323Z" fill="#123aa8" />
          <path d="M1637 311H1645Q1650 317 1645 322H1637Z" fill="url(#logo)" />
        </svg>
      </section>

      <section class="panel msgs">
        <div class="mtabs">
          <button class="cur">消息{@render icon('close')}</button>
          <button>进度</button>
          <button>日志</button>
          <button>表格{@render icon('close')}</button>
        </div>
        <div class="mtools"><button class="tb" aria-label="清除">{@render icon('broom')}</button></div>
        <div class="log">COMSOL Multiphysics 5.6.0.280</div>
        <span class="mark">CSDN @cai90520</span>
      </section>
    </div>
  </main>
</div>

<style>
  :global(body) { margin: 0; overflow: hidden; }
  .app { height: 100vh; display: flex; flex-direction: column; background: #fafbff; color: #000; overflow: hidden; font: 18px/24px "Noto Sans", "Noto Sans CJK SC", sans-serif; }
  .app :global(svg) { display: block; flex: none; overflow: visible; }
  button, input { font: inherit; color: inherit; }
  button { border: 0; padding: 0; margin: 0; background: none; white-space: nowrap; display: flex; align-items: center; justify-content: center; }
  h2, h3, h4, ul { margin: 0; padding: 0; list-style: none; }
  i { display: block; flex: none; }

  .tabs { display: flex; height: 36px; margin-top: 3px; background: #ebecee; flex: none; }
  .tabs button { padding: 2px 15px 0; margin-top: 2px; }
  .tabs .file { background: #368ccb; color: #fff; width: 76px; margin: 2px 3px 2px 0; padding: 2px 18px 0; }
  .tabs .active { background: #fafbff; color: #2f87cc; }

  .ribbon { display: flex; height: 132px; flex: none; border-bottom: 2px solid #d4d5d7; overflow: hidden; box-shadow: inset 0 -2px #edeef0; }
  .sep { width: 2px; margin: 13px 0 8px; background: #d4d5d7; }
  .group { flex: none; display: flex; flex-direction: column; }
  .items { display: flex; height: 109px; }
  .inner { width: 2px; height: 98px; margin-top: 8px; background: #dfe0e2; }
  .glabel { text-align: center; color: #6e6f72; }
  .big { flex-direction: column; justify-content: flex-start; padding-top: 13px; min-width: 46px; }
  .big .pic { height: 48px; display: flex; align-items: center; }
  .big .drop { height: 20px; display: flex; align-items: center; }
  .big:disabled { color: #b0b1b4; }
  .big:disabled .pic { opacity: 0.45; }
  .stack { padding-top: 7px; }
  .small { height: 33px; gap: 4px; justify-content: flex-start; }
  .small .pic { width: 22px; display: flex; justify-content: center; }

  main { flex: 1; min-height: 0; display: grid; grid-template-columns: 415px 429px minmax(0, 1fr); gap: 8px; padding-top: 8px; }
  .panel { box-sizing: border-box; border: 0 solid #d4d5d7; border-top-width: 2px; display: flex; flex-direction: column; min-height: 0; }
  header { display: flex; align-items: center; height: 49px; padding-top: 3px; box-sizing: border-box; color: #4f5052; flex: none; }
  h2 { flex: 1; font-size: 32px; font-weight: 100; line-height: 40px; padding-top: 4px; color: #2b56a0; }
  .hbtn { width: 22px; height: 24px; }
  .tools { display: flex; align-items: center; height: 30px; flex: none; color: #4f5052; }
  .tb { width: 34px; height: 28px; flex: none; }
  .tb.car { width: 22px; }

  .model { border-right-width: 2px; }
  .model h2 { padding-left: 4px; }
  .model .tb.car { width: 20px; }
  .tree { flex: 1; margin-right: 4px; margin-top: 3px; border: 2px solid #d9dadc; border-bottom: 0; background: #fff; }
  .tree li { display: flex; height: 27px; align-items: center; }
  .tree .sel { background: #dadadc; }
  .l1 { padding-left: 30px; }
  .l2 { padding-left: 60px; }
  .l3 { padding-left: 90px; }
  .exp { width: 26px; margin-right: 2px; }
  .node { gap: 9px; }
  .node .pic { width: 27px; display: flex; justify-content: center; }

  .settings { border: 2px solid #99cffa; border-bottom: 0; }
  .settings header { color: #338dd0; }
  .settings h2 { color: #1a8cee; padding-left: 11px; }
  h3 { font-size: 22px; font-weight: 100; line-height: 33px; height: 33px; padding-left: 10px; color: #1a8cee; }
  .actions { display: flex; height: 30px; flex: none; padding-left: 8px; }
  .act { gap: 10px; padding: 0 7px; box-sizing: border-box; height: 30px; }
  .more { color: #4f5052; width: 16px; margin: 0 11px 0 1px; }
  .hot { position: relative; }
  .on { background: #b3dbfa; border: 2px solid #8fa9cf; border-radius: 4px; padding: 0 1px 0 5px; }
  .tip { position: absolute; z-index: 2; left: 67px; top: 35px; box-sizing: border-box; height: 39px; line-height: 35px; padding: 0 10px; border: 2px solid #6f7074; background: #f2f3f9; color: #58595c; white-space: nowrap; }
  .last { margin-left: 3px; }
  .scroller { flex: 1; min-height: 0; display: flex; margin-top: 4px; overflow: hidden; }
  .form { flex: 1; min-width: 0; }
  .bar { width: 25px; padding-top: 26px; background: #fbfbfd; flex: none; }
  .thumb { height: 395px; background: #e4e5e7; }
  .field { display: flex; align-items: center; padding: 16px 7px 0 8px; height: 30px; }
  .field label { width: 54px; flex: none; }
  .field input { flex: 1; min-width: 0; height: 30px; box-sizing: border-box; border: 2px solid #d4d5d7; background: #fff; padding: 0 4px; }
  .go { width: 31px; height: 32px; margin-left: 13px; border: 2px solid #d4d5d7; border-radius: 4px; background: #f0f1f2; }
  .fold { width: 100%; height: 39px; margin-top: 15px; background: #dfe8f4; justify-content: flex-start; padding-left: 8px; gap: 19px; font-size: 20px; }
  .fold :global(svg) { color: #4f5052; }
  h4 { font-weight: 400; padding: 14px 0 9px 8px; }
  .pick { display: flex; height: 180px; padding-left: 6px; }
  .toggle { width: 60px; height: 60px; box-sizing: border-box; border: 2px solid #d4d5d7; border-radius: 4px; background: #f1f2f4; box-shadow: inset 0 0 0 2px #fafafc; }
  .list { flex: 1; margin: 0 19px 0 10px; border: 2px solid #e7e8ea; border-bottom-width: 5px; color: #a9abae; padding: 4px 9px; }
  .ops { display: grid; grid-template-columns: 32px 32px; grid-auto-rows: 30px; column-gap: 17px; margin-right: 6px; }
  .ops button { width: 32px; height: 30px; }
  .swap { width: 218px; height: 26px; margin: 13px 0 -5px 94px; justify-content: center; }
  .keep { display: flex; align-items: center; gap: 7px; padding: 7px 0 0 10px; height: 30px; }
  .keep input { appearance: none; width: 21px; height: 21px; margin: 0; border: 2px solid #707173; background: #f1f2f3; }

  .right { display: flex; flex-direction: column; gap: 8px; min-width: 0; min-height: 0; }
  .view { flex: 1; border-left-width: 2px; border-bottom-width: 1px; background: linear-gradient(#fafbff 110px, #e4f1fe); overflow: hidden; }
  .view h2 { padding-left: 11px; }
  .view header { margin-right: -7px; }
  .view .tools { padding-left: 6px; overflow: hidden; }
  .tb.down { width: 27px; height: 27px; box-sizing: border-box; border: 2px solid #2b569e; border-radius: 4px; background: linear-gradient(#5f8fcd, #b9d9f5 50%, #d4eafc); }
  .tb.wide { width: 55px; gap: 13px; }
  .scene { flex: 1; min-height: 0; width: 100%; }
  .ticks { font: 17px "DejaVu Sans", sans-serif; text-anchor: middle; }

  .msgs { flex: none; height: 139px; border-left-width: 2px; position: relative; }
  .mtabs { display: flex; height: 46px; padding: 9px 0 0 6px; box-sizing: border-box; border-bottom: 2px solid #d4d5d7; gap: 12px; font-size: 20px; flex: none; }
  .mtabs button { background: #ebebec; padding: 0 7px; gap: 13px; height: 35px; }
  .mtabs .cur { background: #fafbff; color: #2b56a0; border: 2px solid #d4d5d7; border-bottom: 0; padding: 3px 7px 0 6px; box-sizing: border-box; height: 38px; }
  .mtools { height: 42px; display: flex; align-items: center; padding-top: 8px; box-sizing: border-box; }
  .mtools .tb { width: 48px; }
  .log { flex: 1; margin-left: 6px; border: 2px solid #d4d5d7; border-width: 2px 0 0 2px; padding: 0 3px; font-size: 19px; }
  .mark { position: absolute; right: 14px; bottom: 4px; font-size: 14px; line-height: 20px; color: #98999c; }
</style>
